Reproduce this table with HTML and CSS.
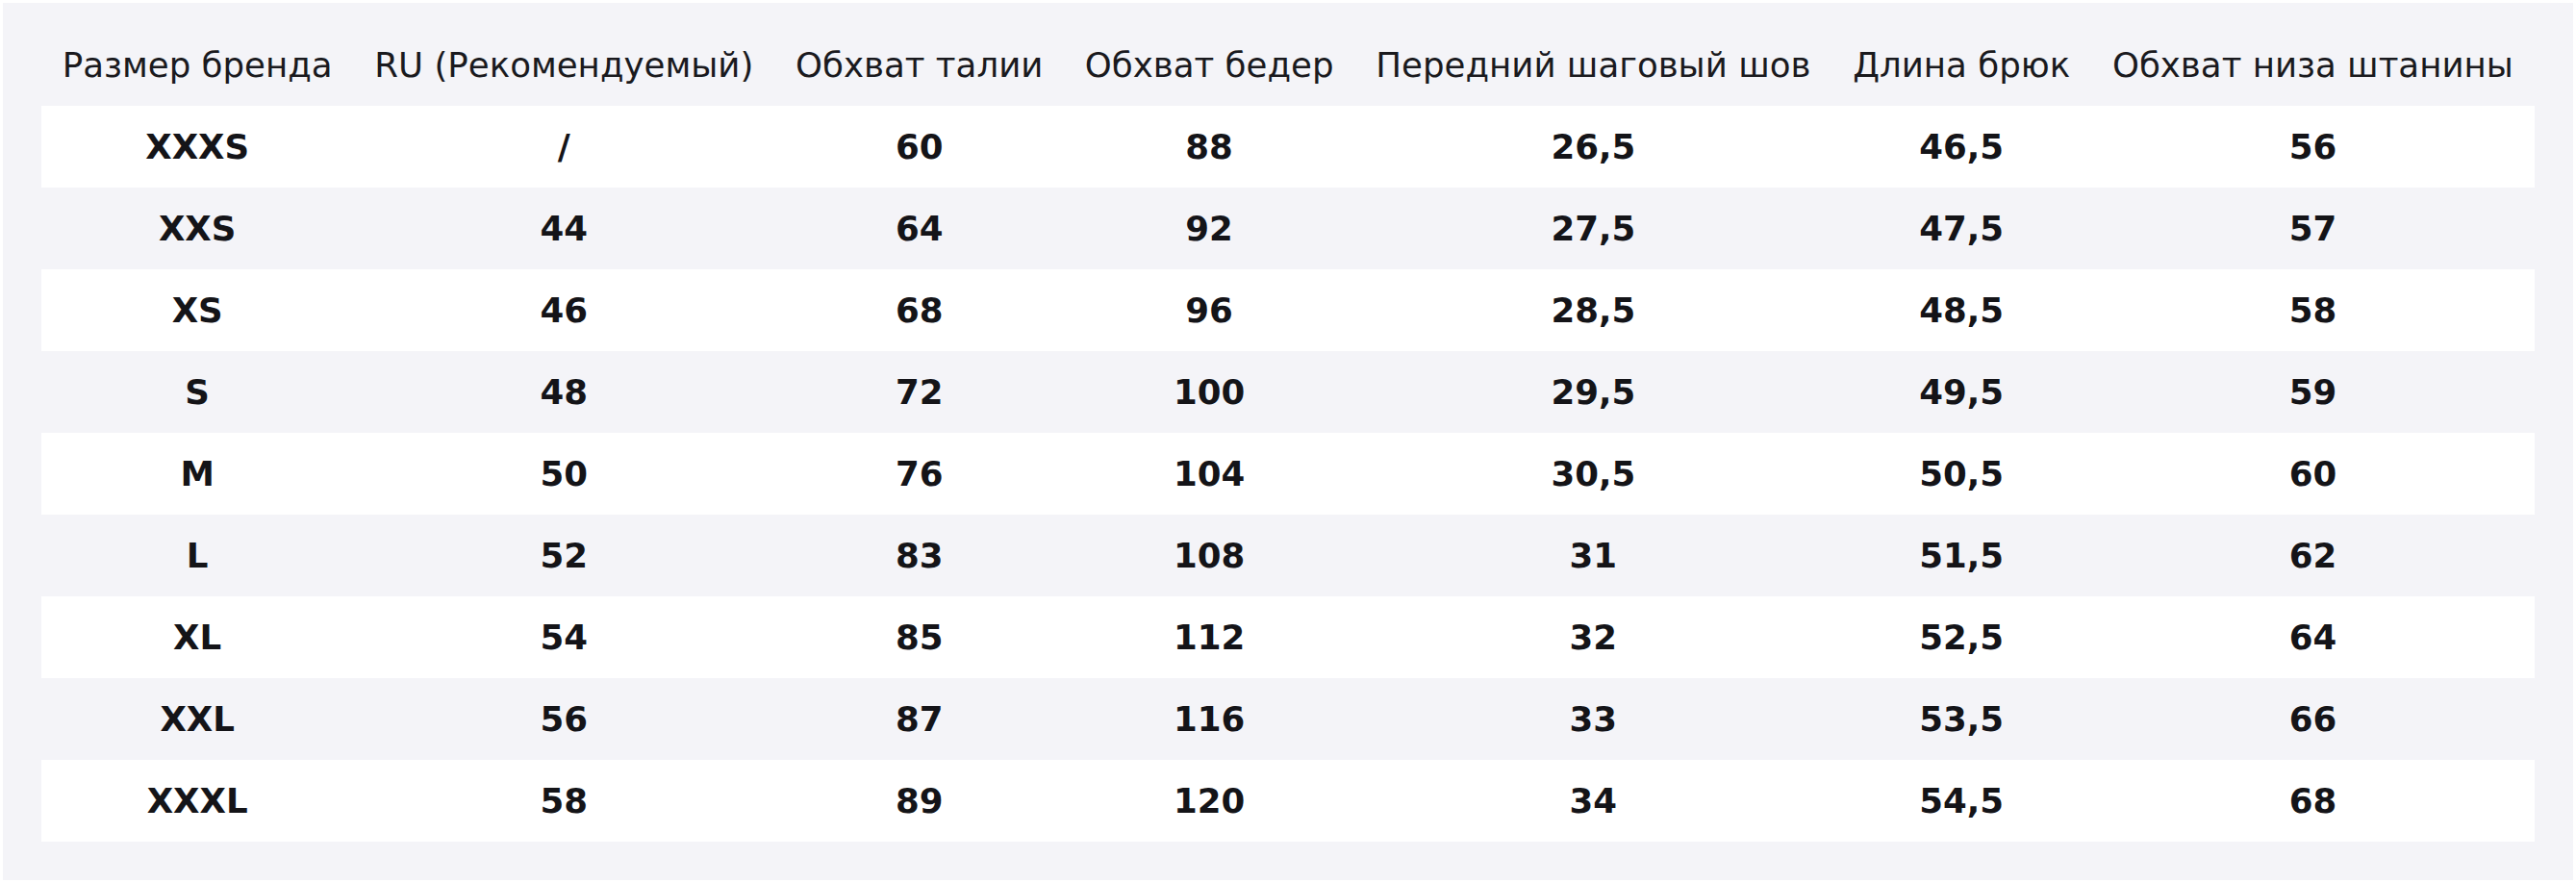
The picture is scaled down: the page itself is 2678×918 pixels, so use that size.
FILE: index.html
```html
<!DOCTYPE html>
<html lang="ru">
<head>
<meta charset="utf-8">
<title>Таблица размеров</title>
<link rel="stylesheet" href="styles.css">
</head>
<body>
<div class="frame">
  <table class="sizes">
    <thead>
      <tr>
        <th>Размер бренда</th>
        <th>RU (Рекомендуемый)</th>
        <th>Обхват талии</th>
        <th>Обхват бедер</th>
        <th>Передний шаговый шов</th>
        <th>Длина брюк</th>
        <th>Обхват низа штанины</th>
      </tr>
    </thead>
    <tbody>
      <tr><td>XXXS</td><td>/</td><td>60</td><td>88</td><td>26,5</td><td>46,5</td><td>56</td></tr>
      <tr><td>XXS</td><td>44</td><td>64</td><td>92</td><td>27,5</td><td>47,5</td><td>57</td></tr>
      <tr><td>XS</td><td>46</td><td>68</td><td>96</td><td>28,5</td><td>48,5</td><td>58</td></tr>
      <tr><td>S</td><td>48</td><td>72</td><td>100</td><td>29,5</td><td>49,5</td><td>59</td></tr>
      <tr><td>M</td><td>50</td><td>76</td><td>104</td><td>30,5</td><td>50,5</td><td>60</td></tr>
      <tr><td>L</td><td>52</td><td>83</td><td>108</td><td>31</td><td>51,5</td><td>62</td></tr>
      <tr><td>XL</td><td>54</td><td>85</td><td>112</td><td>32</td><td>52,5</td><td>64</td></tr>
      <tr><td>XXL</td><td>56</td><td>87</td><td>116</td><td>33</td><td>53,5</td><td>66</td></tr>
      <tr><td>XXXL</td><td>58</td><td>89</td><td>120</td><td>34</td><td>54,5</td><td>68</td></tr>
    </tbody>
  </table>
</div>
</body>
</html>
```

FILE: styles.css
```css
html, body {
  margin: 0;
  background: #ffffff;
}
body {
  padding: 3px;
  font-family: "DejaVu Sans", "Noto Sans", sans-serif;
  color: #16161a;
}
.frame {
  background: #f4f4f8;
  padding: 22px 40px 40px;
}
.sizes {
  width: 100%;
  border-collapse: collapse;
  border-spacing: 0;
}
.sizes th,
.sizes td {
  height: 85px;
  padding: 0 21px;
  text-align: center;
  white-space: nowrap;
  box-sizing: border-box;
}
.sizes th {
  font-size: 35.6px;
  font-weight: normal;
  color: #1a1a1e;
}
.sizes td {
  font-size: 35.6px;
  font-weight: bold;
  color: #141418;
}
.sizes tbody tr:nth-child(odd) {
  background: #ffffff;
}
```
